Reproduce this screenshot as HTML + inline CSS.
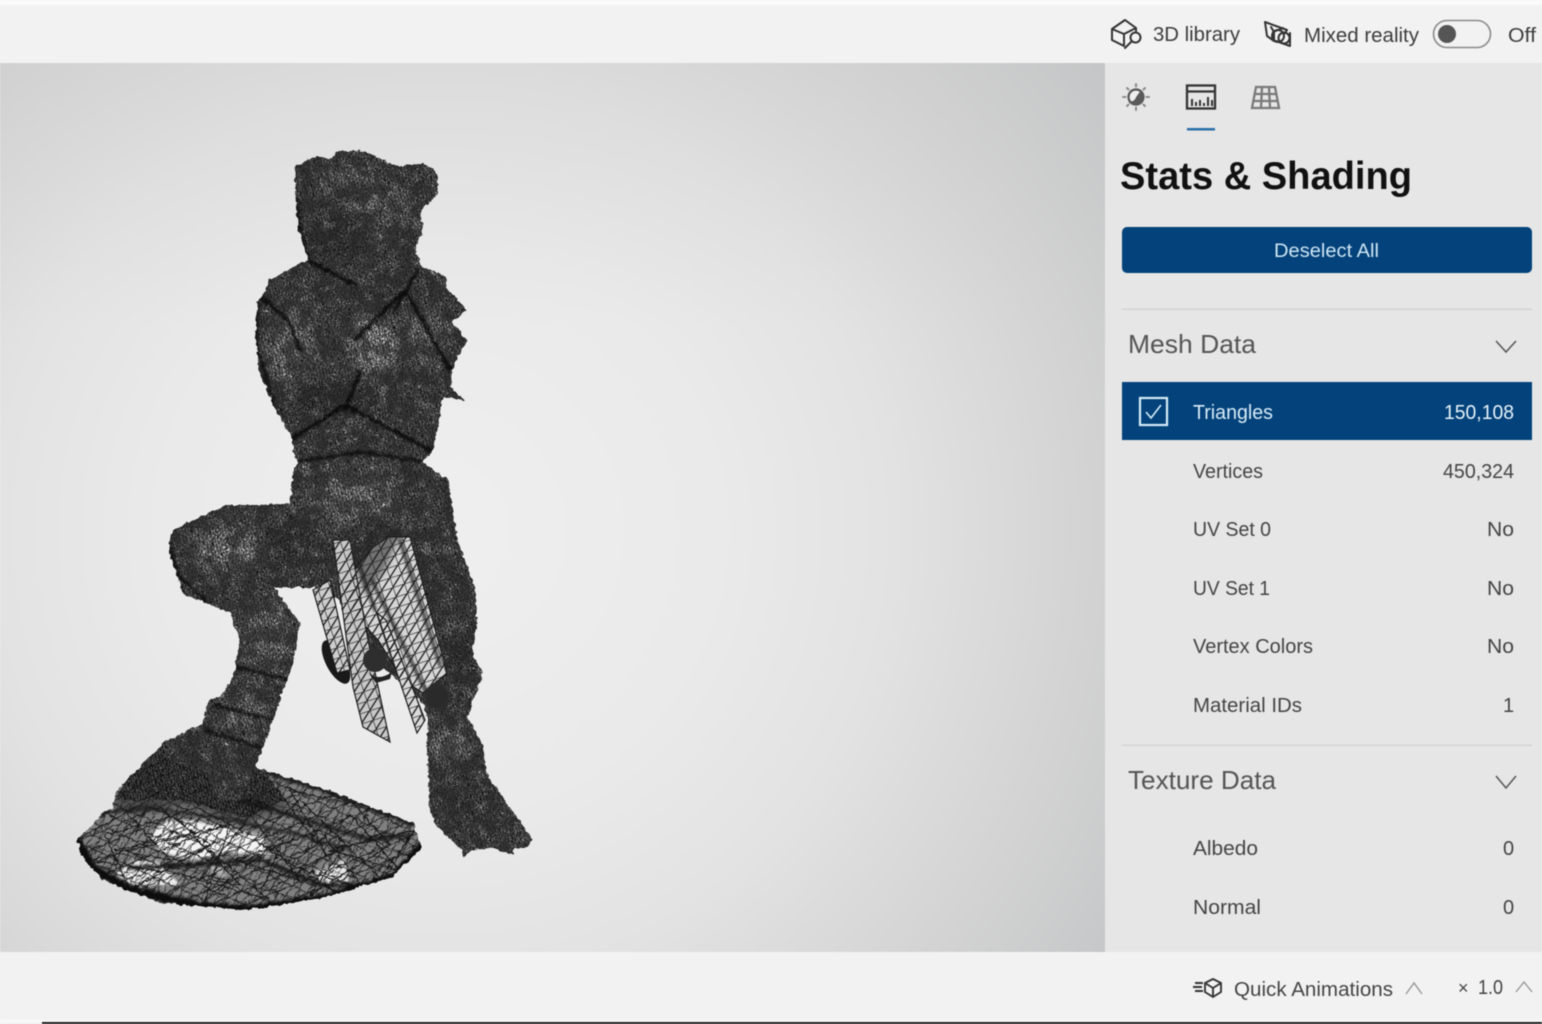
<!DOCTYPE html>
<html lang="en">
<head>
<meta charset="utf-8">
<title>Stats &amp; Shading</title>
<style>
html,body{margin:0;padding:0;width:1542px;height:1024px;overflow:hidden;background:#f2f2f2}
svg{display:block;position:absolute;left:0;top:0;filter:blur(.4px)}
text{font-family:"Liberation Sans",sans-serif}
</style>
</head>
<body>
<svg width="1542" height="1024" viewBox="0 0 1542 1024" xmlns="http://www.w3.org/2000/svg">
<defs>
<radialGradient id="bg" gradientUnits="userSpaceOnUse" cx="440" cy="530" r="810">
<stop offset="0" stop-color="#efefef"/><stop offset=".35" stop-color="#eaeaea"/><stop offset=".55" stop-color="#e3e3e3"/><stop offset=".8" stop-color="#d3d3d3"/><stop offset="1" stop-color="#c4c6c7"/>
</radialGradient>
<linearGradient id="topshade" x1="0" y1="0" x2="0" y2="1">
<stop offset="0" stop-color="#c8c8c8" stop-opacity=".25"/><stop offset=".3" stop-color="#c8c8c8" stop-opacity="0"/>
</linearGradient>
<pattern id="fine" width="4.300" height="4.300" patternUnits="userSpaceOnUse" patternTransform="rotate(32)">
<path d="M0 0H4.300M0 0V4.300M0 0L4.300 4.300" stroke="#0a0a0a" stroke-width=".85" fill="none"/>
</pattern>
<pattern id="fine2" width="7.300" height="3.700" patternUnits="userSpaceOnUse" patternTransform="rotate(-24)">
<path d="M0 0H7.300M0 3.700L7.300 0" stroke="#0a0a0a" stroke-width=".45" fill="none"/>
</pattern>
<pattern id="rock1" width="23" height="17" patternUnits="userSpaceOnUse" patternTransform="rotate(14)">
<path d="M0 0H23M0 0V17M0 17L23 0" stroke="#161616" stroke-width="1" fill="none"/>
</pattern>
<pattern id="rock2" width="14" height="27" patternUnits="userSpaceOnUse" patternTransform="rotate(-38)">
<path d="M0 0H14M0 0L14 27" stroke="#1c1c1c" stroke-width=".9" fill="none"/>
</pattern>
<pattern id="rock3" width="9" height="19" patternUnits="userSpaceOnUse" patternTransform="rotate(58)">
<path d="M0 0V19M0 0L9 19" stroke="#1c1c1c" stroke-width=".8" fill="none"/>
</pattern>
<pattern id="strip" width="12" height="10" patternUnits="userSpaceOnUse" patternTransform="rotate(-18)">
<path d="M0 0H12M0 0V10M0 10L12 0" stroke="#1c1c1c" stroke-width="1.300" fill="none"/>
</pattern>
<filter id="speck" x="0" y="0" width="100%" height="100%">
<feTurbulence type="fractalNoise" baseFrequency="1.1" numOctaves="1" seed="7"/>
<feColorMatrix values="0 0 0 0 .85  0 0 0 0 .85  0 0 0 0 .85  5 0 0 0 -2.7"/>
</filter>
<filter id="speckd" x="0" y="0" width="100%" height="100%">
<feTurbulence type="fractalNoise" baseFrequency=".45" numOctaves="2" seed="21"/>
<feColorMatrix values="0 0 0 0 .03  0 0 0 0 .03  0 0 0 0 .03  7 0 0 0 -3.4"/>
</filter>
<filter id="patchd" x="0" y="0" width="100%" height="100%">
<feTurbulence type="fractalNoise" baseFrequency=".07" numOctaves="3" seed="12"/>
<feColorMatrix values="0 0 0 0 .02  0 0 0 0 .02  0 0 0 0 .02  6 0 0 0 -2.6"/>
</filter>
<filter id="patchl" x="0" y="0" width="100%" height="100%">
<feTurbulence type="fractalNoise" baseFrequency=".09" numOctaves="3" seed="33"/>
<feColorMatrix values="0 0 0 0 .8  0 0 0 0 .8  0 0 0 0 .8  5 0 0 0 -2.7"/>
</filter>
<filter id="rough" filterUnits="userSpaceOnUse" x="60" y="130" width="500" height="800">
<feTurbulence type="fractalNoise" baseFrequency=".18" numOctaves="2" seed="4" result="n"/>
<feDisplacementMap in="SourceGraphic" in2="n" scale="5" xChannelSelector="R" yChannelSelector="G"/>
</filter>
<filter id="b1"><feGaussianBlur stdDeviation="1.200"/></filter>
<filter id="b2"><feGaussianBlur stdDeviation="3"/></filter>
<filter id="b5"><feGaussianBlur stdDeviation="6"/></filter>
<clipPath id="body"><path d="M295 167L313 157L332 158L335 152L360 150L380 158L400 167L422 162L437 173L438 193L420 212L423 230L415 250L422 267L443 275L448 280L445 287L467 310L452 322L467 340L453 367L450 387L465 400L443 397L437 433L432 453L422 462L448 480L452 507L457 540L475 587L477 627L472 653L483 673L467 717L473 727L482 743L488 777L507 803L533 840L527 848L515 848L513 855L493 848L473 850L463 857L462 850L437 827L430 810L427 750L428 720L424 705L410 690L350 640L340 600L320 588L273 587L300 623L293 663L277 707L263 747L255 768L240 800L220 800L205 770L170 762L163 743L203 723L208 700L220 697L233 677L237 660L240 640L230 613L200 600L183 593L170 553L170 540L173 530L200 517L227 505L263 505L290 503L293 473L298 463L295 457L290 433L277 413L260 373L255 340L258 303L270 280L308 260L305 250L298 227L295 197Z"/></clipPath>
<clipPath id="rockc"><path d="M103 813L113 807L115 793L127 780L163 743L203 723L235 760L263 770L327 790L413 823L422 847L393 877L327 897L247 910L160 903L103 880L84 860L77 840Z"/></clipPath>
</defs>

<!-- app chrome -->
<rect width="1542" height="5" fill="#fbfbfb"/>
<rect y="5" width="1542" height="58" fill="#f2f2f2"/>
<rect y="63" width="1105" height="889" fill="url(#bg)"/>
<rect y="63" width="1105" height="889" fill="url(#topshade)"/>
<rect x="1105" y="63" width="437" height="889" fill="#e6e6e6"/>
<rect y="952" width="1542" height="68" fill="#f2f2f2"/>
<rect y="1020" width="1542" height="2" fill="#fafafa"/>
<rect x="42" y="1022" width="1500" height="2" fill="#1a1a1a"/>

<g filter="url(#rough)">
<!-- rock base -->
<g clip-path="url(#rockc)">
<rect x="70" y="720" width="360" height="200" fill="#808080"/>
<g filter="url(#b1)">
<path d="M150 835L165 822L190 820L260 835L270 856L230 852L195 860L160 852Z" fill="#f4f4f4"/>
<path d="M115 872L135 860L160 862L180 885L130 885Z" fill="#eeeeee"/>
<path d="M315 872L345 860L350 885L320 885Z" fill="#e8e8e8"/>
<path d="M165 790L180 785L178 800Z" fill="#bbb"/>
<path d="M208 868L225 860L225 880Z" fill="#b0b0b0"/>
</g>
<rect x="70" y="720" width="360" height="200" fill="url(#rock1)"/>
<rect x="70" y="720" width="360" height="200" fill="url(#rock2)"/>
<rect x="70" y="720" width="360" height="200" fill="url(#rock3)"/>
<g fill="none" stroke="#141414" stroke-width="1.100">
<path d="M80 838L150 800L210 845L130 890L105 835L175 815L240 885L150 870L92 860L190 835L270 900L200 880L250 815L300 880L235 860L320 830L365 890L290 865L350 815L400 870L330 850L415 830L380 878L300 800L255 840L340 895"/>
<path d="M120 805L170 860L115 850L230 825L205 900L285 835L260 895L345 845L310 895L390 845L355 805L290 790L330 860L270 780L240 830L155 785L135 835"/>
</g>
<path d="M110 810L127 780L163 743L203 723L260 770L290 805L245 825L185 805L140 815Z" fill="#333" opacity=".6" filter="url(#b2)"/>
<path d="M115 800L127 780L163 743L203 723L260 770L285 800L245 818L185 800Z" fill="url(#fine)"/>
<g filter="url(#b1)" fill="none" stroke="#111" stroke-linecap="round">
<path d="M103 813L150 808L220 818L300 835L350 850" stroke-width="3.500" opacity=".75"/>
<path d="M130 868L190 865L260 860L320 885L360 885" stroke-width="4.500" opacity=".85"/>
<path d="M240 800L300 818L370 840L410 835" stroke-width="5" opacity=".75"/>
<path d="M265 772L330 792L412 824" stroke-width="5" opacity=".85"/>
<path d="M78 842L92 868L130 890L200 906L250 910L330 897L395 877L421 847" stroke-width="9"/>
</g>
</g>

<!-- wireframe model: body -->
<g clip-path="url(#body)">
<rect x="160" y="140" width="380" height="730" fill="#545454"/>
<g filter="url(#b5)">
<ellipse cx="372" cy="345" rx="24" ry="26" fill="#dedede"/>
<ellipse cx="290" cy="345" rx="24" ry="36" fill="#a8a8a8"/>
<ellipse cx="425" cy="335" rx="22" ry="26" fill="#a0a0a0"/>
<ellipse cx="225" cy="550" rx="34" ry="22" fill="#bcbcbc"/>
<ellipse cx="355" cy="497" rx="42" ry="24" fill="#aeaeae"/>
<ellipse cx="265" cy="640" rx="24" ry="40" fill="#929292"/>
<ellipse cx="240" cy="715" rx="24" ry="16" fill="#a4a4a4"/>
<ellipse cx="385" cy="205" rx="24" ry="22" fill="#8c8c8c"/>
<ellipse cx="345" cy="175" rx="30" ry="14" fill="#7c7c7c"/>
<ellipse cx="450" cy="745" rx="20" ry="14" fill="#c4c4c4"/>
<ellipse cx="335" cy="240" rx="30" ry="24" fill="#303030"/>
<ellipse cx="330" cy="400" rx="40" ry="18" fill="#303030"/>
<ellipse cx="465" cy="810" rx="20" ry="30" fill="#424242"/>
<ellipse cx="460" cy="655" rx="12" ry="24" fill="#303030"/>
<ellipse cx="290" cy="540" rx="26" ry="22" fill="#383838"/>
</g>
<rect x="160" y="140" width="380" height="730" filter="url(#patchl)" opacity=".45"/>
<rect x="160" y="140" width="380" height="730" fill="url(#fine)"/>
<rect x="160" y="140" width="380" height="730" fill="url(#fine2)"/>
<rect x="160" y="140" width="380" height="730" filter="url(#speck)" opacity=".75"/>
<rect x="160" y="140" width="380" height="730" filter="url(#speckd)" opacity=".6"/>
<rect x="160" y="140" width="380" height="730" filter="url(#patchd)" opacity=".6"/>
<g filter="url(#b1)" fill="none" stroke="#050505" stroke-linecap="round">
<path d="M262 298L288 320L300 350M310 262L355 285M417 272L395 310M355 340L405 290L450 370M360 372L345 410M290 440L345 405L430 450" stroke-width="3.500" opacity=".85"/>
<path d="M296 462L360 452L425 462M170 545L178 575L205 600M258 300L256 345L277 413M297 200L300 230L308 260M228 665L290 680M215 705L272 720M205 730L262 748" stroke-width="3" opacity=".75"/>
</g>
</g>
</g>

<!-- dangling strips -->
<ellipse cx="336" cy="662" rx="10" ry="24" fill="#1a1a1a" transform="rotate(-28 336 662)"/>
<g stroke="#1c1c1c" stroke-width="1.200">
<path d="M343 585L372 548L388 537L410 537L447 673L423 693L403 680L378 640L357 617Z" fill="#d6d6d6"/>
<path d="M313 590L330 580L350 670L337 673Z" fill="#cecece"/>
<path d="M333 540L350 540L368 640L390 742L363 727L353 687Z" fill="#c8c8c8"/>
<path d="M377 613L386 620L425 720L417 733Z" fill="#dadada"/>
</g>
<path d="M343 585L372 548L388 537L410 537L447 673L423 693L403 680L378 640L357 617Z" fill="url(#strip)"/>
<path d="M313 590L330 580L350 670L337 673Z" fill="url(#strip)"/>
<path d="M333 540L350 540L368 640L390 742L363 727L353 687Z" fill="url(#strip)"/>
<path d="M377 613L386 620L425 720L417 733Z" fill="url(#strip)"/>
<g filter="url(#b1)" fill="none" stroke="#1a1a1a" stroke-linecap="round">
<path d="M357 560L375 610M372 580L425 690M400 540L440 665" stroke-width="4" opacity=".75"/>
</g>
<path d="M352 555L372 530L402 530L385 570L365 595Z" fill="#222" opacity=".55" filter="url(#b2)"/>
<circle cx="375" cy="660" r="12" fill="#2e2e2e"/>
<path d="M368 672Q378 682 392 672L390 679L376 683Z" fill="#222"/>
<circle cx="437" cy="697" r="13" fill="#2a2a2a" filter="url(#b1)"/>

<!-- top bar -->
<g fill="none" stroke="#333" stroke-width="2" stroke-linejoin="round" stroke-linecap="round">
<path d="M1125 20L1136 28L1136 31M1125 20L1112 29L1112 40L1124 46M1112 29L1124 34L1136 28M1124 34L1124 46"/>
<circle cx="1135.500" cy="37.500" r="5"/>
<path d="M1131.500 41.500L1125 48"/>
<path d="M1265 22L1287 30L1285 33M1265 22L1267 36L1274 41M1271 27L1274 32L1274 41M1273 32L1283 28M1290 33V46L1276 41"/>
<circle cx="1278" cy="36" r="6"/>
<circle cx="1284" cy="38" r="5.500"/>
</g>
<text x="1153" y="41" font-size="20" fill="#3c3c3c" textLength="87" lengthAdjust="spacingAndGlyphs">3D library</text>
<text x="1304" y="42" font-size="20" fill="#3c3c3c" textLength="115" lengthAdjust="spacingAndGlyphs">Mixed reality</text>
<rect x="1433.500" y="20.500" width="57" height="27" rx="13.500" fill="#f2f2f2" stroke="#8a8a8a" stroke-width="1.600"/>
<circle cx="1447" cy="34" r="9" fill="#555"/>
<text x="1508" y="42" font-size="20" fill="#3c3c3c" textLength="28" lengthAdjust="spacingAndGlyphs">Off</text>

<!-- panel tabs -->
<g fill="none" stroke="#8a8a8a" stroke-width="2" stroke-linecap="round">
<path d="M1136 84V86.500M1136 107.500V110M1123 97H1125.500M1146.500 97H1149M1127 88L1128.500 89.500M1145 88L1143.500 89.500M1127 106L1128.500 104.500M1145 106L1143.500 104.500"/>
</g>
<circle cx="1136" cy="97" r="7.500" fill="#f0f0f0" stroke="#555" stroke-width="2.200"/>
<path d="M1141 91.500A7.500 7.500 0 0 1 1130 102.500A8 8 0 0 0 1137 97Z" fill="#5a5a5a" stroke="#5a5a5a" stroke-width="1.500"/>
<g fill="none" stroke="#333">
<rect x="1187" y="85.500" width="28" height="23" stroke-width="2.300"/>
<path d="M1187 91.500H1215" stroke-width="2.300"/>
<path d="M1192 106V99M1196 106V102M1200 106V100M1204 106V103M1208 106V97M1212 106V100" stroke-width="2"/>
</g>
<rect x="1187" y="128" width="28" height="2.500" fill="#2a6fa8"/>
<g fill="none" stroke="#7a7a7a" stroke-width="2.300">
<path d="M1256 87H1275L1279 108H1252Z"/>
<path d="M1254.500 94H1276.500M1253 101H1278M1262 87L1261 108M1269 87L1270 108"/>
</g>

<text x="1120" y="189" font-size="39" font-weight="700" fill="#111" textLength="292" lengthAdjust="spacingAndGlyphs">Stats &amp; Shading</text>

<rect x="1122" y="227" width="410" height="46" rx="5" fill="#03427a"/>
<text x="1274" y="257" font-size="19.500" fill="#cfe6f5" textLength="105" lengthAdjust="spacingAndGlyphs">Deselect All</text>

<rect x="1122" y="308.500" width="410" height="1.500" fill="#d4d4d4"/>
<text x="1128" y="353" font-size="26" fill="#555" textLength="128" lengthAdjust="spacingAndGlyphs">Mesh Data</text>
<path d="M1496 341L1506 352L1516 341" fill="none" stroke="#555" stroke-width="1.500"/>

<rect x="1122" y="382" width="410" height="58" fill="#03427a"/>
<rect x="1140" y="398" width="27" height="27" fill="none" stroke="#d5ecf8" stroke-width="2.200"/>
<path d="M1146 412L1151 418L1161 405" fill="none" stroke="#d5ecf8" stroke-width="1.600"/>
<text x="1193" y="419" font-size="20" fill="#d9ecf8" textLength="80" lengthAdjust="spacingAndGlyphs">Triangles</text>
<text x="1444" y="419" font-size="20" fill="#e6f2fa" textLength="70" lengthAdjust="spacingAndGlyphs">150,108</text>

<g font-size="20" fill="#444">
<text x="1193" y="478" textLength="70" lengthAdjust="spacingAndGlyphs">Vertices</text>
<text x="1443" y="478" textLength="71" lengthAdjust="spacingAndGlyphs">450,324</text>
<text x="1193" y="536" textLength="78" lengthAdjust="spacingAndGlyphs">UV Set 0</text>
<text x="1487" y="536" textLength="27" lengthAdjust="spacingAndGlyphs">No</text>
<text x="1193" y="595" textLength="77" lengthAdjust="spacingAndGlyphs">UV Set 1</text>
<text x="1487" y="595" textLength="27" lengthAdjust="spacingAndGlyphs">No</text>
<text x="1193" y="653" textLength="120" lengthAdjust="spacingAndGlyphs">Vertex Colors</text>
<text x="1487" y="653" textLength="27" lengthAdjust="spacingAndGlyphs">No</text>
<text x="1193" y="712" textLength="109" lengthAdjust="spacingAndGlyphs">Material IDs</text>
<text x="1503" y="712">1</text>
<text x="1193" y="855" textLength="65" lengthAdjust="spacingAndGlyphs">Albedo</text>
<text x="1503" y="855">0</text>
<text x="1193" y="914" textLength="68" lengthAdjust="spacingAndGlyphs">Normal</text>
<text x="1503" y="914">0</text>
</g>

<rect x="1122" y="744.500" width="410" height="1.500" fill="#d4d4d4"/>
<text x="1128" y="789" font-size="26" fill="#555" textLength="148" lengthAdjust="spacingAndGlyphs">Texture Data</text>
<path d="M1496 776L1506 788L1516 776" fill="none" stroke="#555" stroke-width="1.500"/>

<!-- bottom bar -->
<g fill="none" stroke="#333" stroke-width="1.900" stroke-linejoin="round">
<path d="M1213 979L1221 983V992L1213 997L1205 992V983ZM1205 983L1213 988L1221 983M1213 988V997"/>
<path d="M1195 983H1203M1193 987H1202M1195 991H1203"/>
</g>
<text x="1234" y="996" font-size="20" fill="#444" textLength="159" lengthAdjust="spacingAndGlyphs">Quick Animations</text>
<path d="M1406 994L1414 983L1422 994" fill="none" stroke="#999" stroke-width="1.400"/>
<text x="1458" y="994" font-size="18" fill="#444">×</text>
<text x="1478" y="994" font-size="20" fill="#444" textLength="25" lengthAdjust="spacingAndGlyphs">1.0</text>
<path d="M1516 992L1524 982L1532 992" fill="none" stroke="#999" stroke-width="1.400"/>
</svg>
</body>
</html>
